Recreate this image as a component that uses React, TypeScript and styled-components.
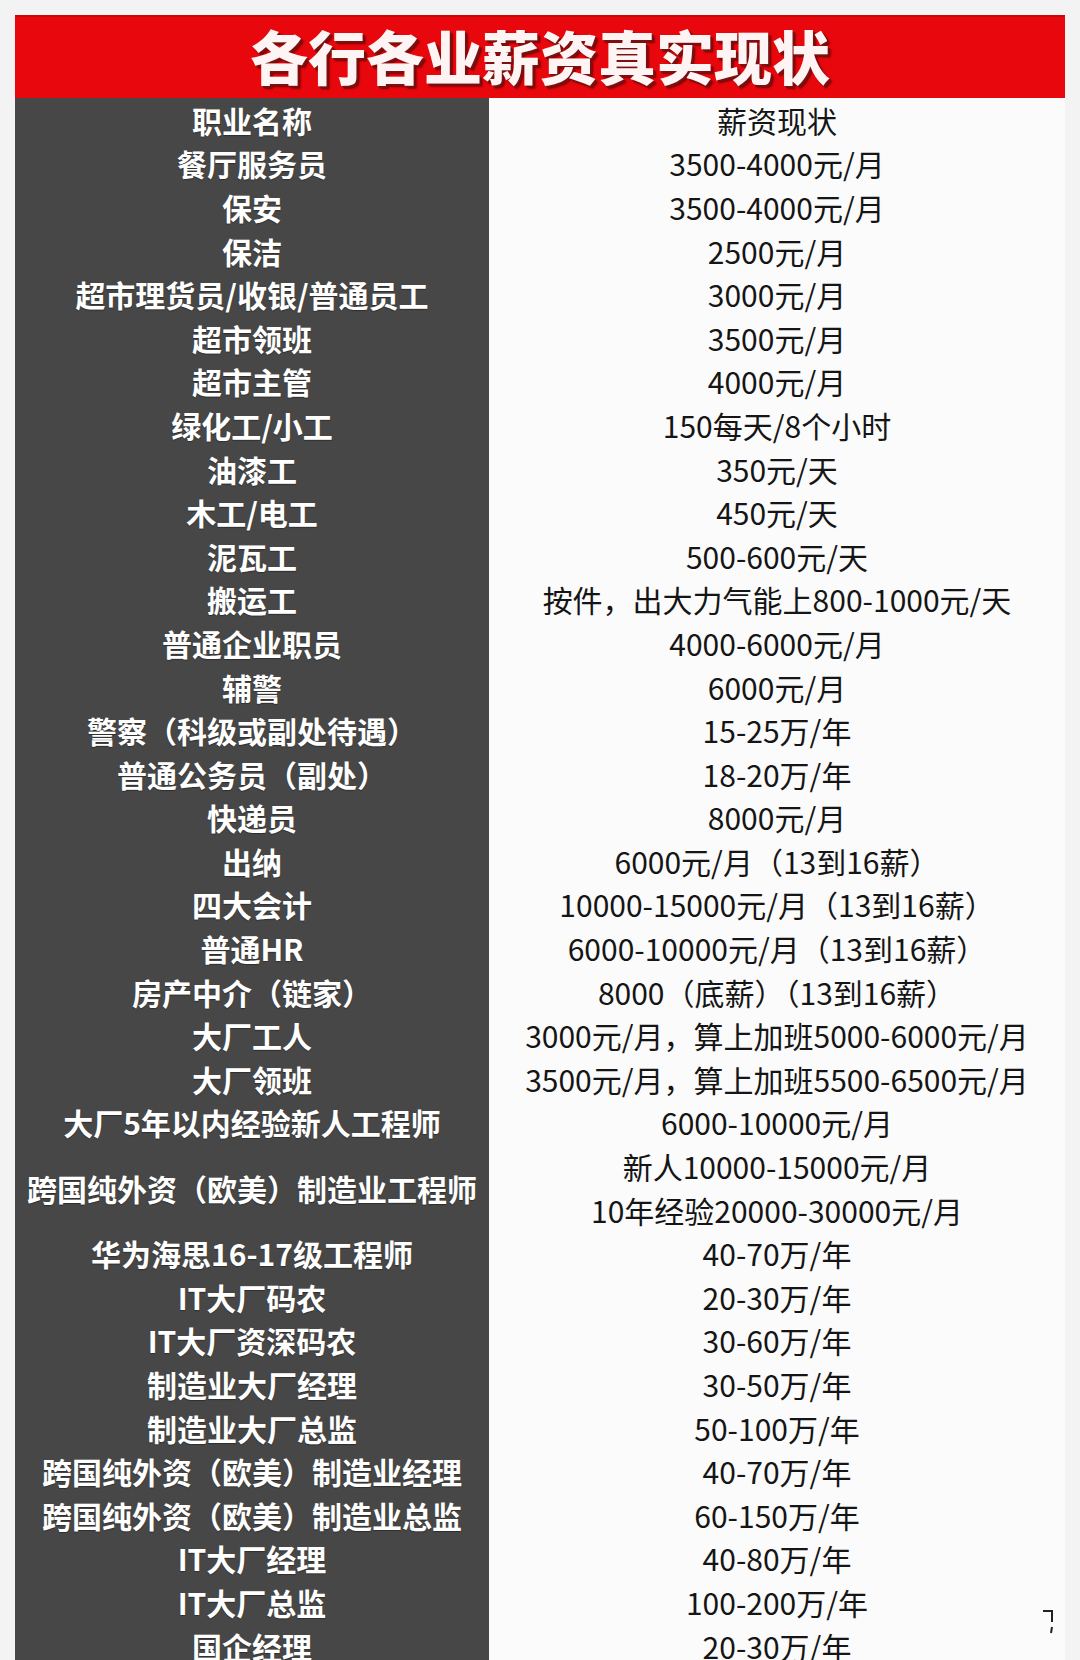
import React from 'react';
import styled, { createGlobalStyle } from 'styled-components';

const GlobalStyle = createGlobalStyle`
  html, body {
    margin: 0;
    padding: 0;
    background: #f3f3f3;
  }
  body {
    font-family: "Noto Sans CJK SC", "Noto Sans", sans-serif;
  }
`;

const Page = styled.div`
  position: relative;
  width: 1080px;
  height: 1660px;
  overflow: hidden;
  padding: 15px 15px 0;
  box-sizing: border-box;
`;

const Banner = styled.header`
  height: 83px;
  background: #e8070c;
  box-shadow: inset 0 2px 0 #c9060a;
  display: flex;
  align-items: center;
  justify-content: center;
`;

const Title = styled.h1`
  margin: 0;
  font-size: 58px;
  font-weight: 900;
  line-height: 1;
  color: #fff4f4;
  text-shadow: 2px 2px 0 #7a1010, 3px 3px 2px rgba(40, 0, 0, 0.6);
  transform: translate(0px, -2px);
`;

const Table = styled.div`
  display: grid;
  grid-template-columns: 474px 1fr;
`;

const NameCell = styled.div<{ $span?: number }>`
  background: #474747;
  color: #ffffff;
  font-weight: 700;
  font-size: 30px;
  height: ${(p) => 43.6 * (p.$span ?? 1)}px;
  display: flex;
  align-items: center;
  justify-content: center;
  white-space: nowrap;
  text-shadow: 0 1px 1px rgba(0, 0, 0, 0.35);
`;

const PayCell = styled.div<{ $span?: number }>`
  background: #fbfbfb;
  color: #151515;
  font-weight: 400;
  font-size: 30px;
  height: ${(p) => 43.6 * (p.$span ?? 1)}px;
  display: flex;
  flex-direction: column;
  align-items: center;
  justify-content: center;
  white-space: nowrap;
`;

const PayLine = styled.div`
  height: 43.6px;
  display: flex;
  align-items: center;
`;

const Mark = styled.svg`
  position: absolute;
  left: 1040px;
  top: 1608px;
`;

type Row = { name: string; pay: string[] };

const rows: Row[] = [
  { name: '职业名称', pay: ['薪资现状'] },
  { name: '餐厅服务员', pay: ['3500-4000元/月'] },
  { name: '保安', pay: ['3500-4000元/月'] },
  { name: '保洁', pay: ['2500元/月'] },
  { name: '超市理货员/收银/普通员工', pay: ['3000元/月'] },
  { name: '超市领班', pay: ['3500元/月'] },
  { name: '超市主管', pay: ['4000元/月'] },
  { name: '绿化工/小工', pay: ['150每天/8个小时'] },
  { name: '油漆工', pay: ['350元/天'] },
  { name: '木工/电工', pay: ['450元/天'] },
  { name: '泥瓦工', pay: ['500-600元/天'] },
  { name: '搬运工', pay: ['按件，出大力气能上800-1000元/天'] },
  { name: '普通企业职员', pay: ['4000-6000元/月'] },
  { name: '辅警', pay: ['6000元/月'] },
  { name: '警察（科级或副处待遇）', pay: ['15-25万/年'] },
  { name: '普通公务员（副处）', pay: ['18-20万/年'] },
  { name: '快递员', pay: ['8000元/月'] },
  { name: '出纳', pay: ['6000元/月（13到16薪）'] },
  { name: '四大会计', pay: ['10000-15000元/月（13到16薪）'] },
  { name: '普通HR', pay: ['6000-10000元/月（13到16薪）'] },
  { name: '房产中介（链家）', pay: ['8000（底薪）（13到16薪）'] },
  { name: '大厂工人', pay: ['3000元/月，算上加班5000-6000元/月'] },
  { name: '大厂领班', pay: ['3500元/月，算上加班5500-6500元/月'] },
  { name: '大厂5年以内经验新人工程师', pay: ['6000-10000元/月'] },
  {
    name: '跨国纯外资（欧美）制造业工程师',
    pay: ['新人10000-15000元/月', '10年经验20000-30000元/月'],
  },
  { name: '华为海思16-17级工程师', pay: ['40-70万/年'] },
  { name: 'IT大厂码农', pay: ['20-30万/年'] },
  { name: 'IT大厂资深码农', pay: ['30-60万/年'] },
  { name: '制造业大厂经理', pay: ['30-50万/年'] },
  { name: '制造业大厂总监', pay: ['50-100万/年'] },
  { name: '跨国纯外资（欧美）制造业经理', pay: ['40-70万/年'] },
  { name: '跨国纯外资（欧美）制造业总监', pay: ['60-150万/年'] },
  { name: 'IT大厂经理', pay: ['40-80万/年'] },
  { name: 'IT大厂总监', pay: ['100-200万/年'] },
  { name: '国企经理', pay: ['20-30万/年'] },
];

export default function App() {
  return (
    <>
      <GlobalStyle />
      <Page>
        <Banner>
          <Title>各行各业薪资真实现状</Title>
        </Banner>
        <Table>
          {rows.map((r, i) => (
            <React.Fragment key={i}>
              <NameCell $span={r.pay.length}>{r.name}</NameCell>
              <PayCell $span={r.pay.length}>
                {r.pay.map((p, j) => (
                  <PayLine key={j}>{p}</PayLine>
                ))}
              </PayCell>
            </React.Fragment>
          ))}
        </Table>
        {/* small stray mark at the right edge */}
        <Mark width="20" height="32" viewBox="0 0 20 32">
          <path d="M3 3 H12 V14" fill="none" stroke="#222" strokeWidth="2" />
          <path d="M12 19 L11 25" fill="none" stroke="#222" strokeWidth="2" />
        </Mark>
      </Page>
    </>
  );
}
